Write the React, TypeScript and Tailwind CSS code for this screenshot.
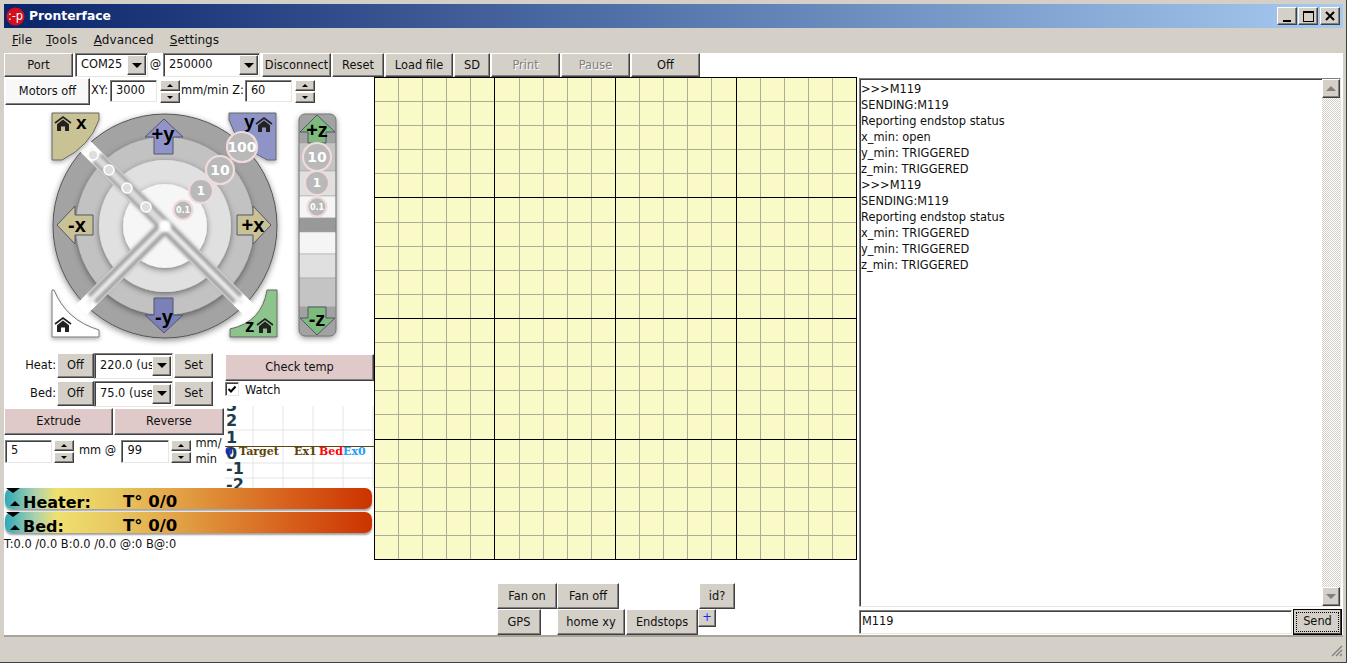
import type { ReactNode } from "react";

const raised =
  "border border-t-white border-l-white border-r-[#404040] border-b-[#404040] shadow-[inset_-1px_-1px_0_#808080]";
const sunken =
  "border border-t-[#808080] border-l-[#808080] border-r-[#e8e6e0] border-b-[#e8e6e0] shadow-[inset_1px_1px_0_#404040]";

const logLines = [
  ">>>M119",
  "SENDING:M119",
  "Reporting endstop status",
  "x_min: open",
  "y_min: TRIGGERED",
  "z_min: TRIGGERED",
  ">>>M119",
  "SENDING:M119",
  "Reporting endstop status",
  "x_min: TRIGGERED",
  "y_min: TRIGGERED",
  "z_min: TRIGGERED",
];

function Btn({ children, className = "" }: { children?: ReactNode; className?: string }) {
  return (
    <div className={`flex shrink-0 items-center justify-center bg-[#d4d0c8] ${raised} ${className}`}>
      {children}
    </div>
  );
}

function TextBtn({ children, className = "" }: { children?: ReactNode; className?: string }) {
  return <Btn className={`pt-px ${className}`}>{children}</Btn>;
}

function PinkBtn({ children, className = "" }: { children?: ReactNode; className?: string }) {
  return (
    <div className={`flex shrink-0 items-center justify-center bg-[#dfc9c9] pt-px ${raised} ${className}`}>
      {children}
    </div>
  );
}

function Tri({ up = false, color = "border-black", size = "small" }: { up?: boolean; color?: string; size?: string }) {
  const w = size === "small" ? "border-x-[3px]" : "border-x-[5px]";
  const h = size === "small" ? (up ? "border-b-[3px]" : "border-t-[3px]") : up ? "border-b-[5px]" : "border-t-[5px]";
  return <div className={`h-0 w-0 border-x-transparent ${w} ${h} ${color}`} />;
}

function Spinner({ className = "" }: { className?: string }) {
  return (
    <div className={`flex w-[20px] shrink-0 flex-col gap-px ${className}`}>
      <Btn className="h-[11px]">
        <Tri up />
      </Btn>
      <Btn className="h-[11px]">
        <Tri />
      </Btn>
    </div>
  );
}

function Field({ value, className = "" }: { value: string; className?: string }) {
  return <div className={`flex shrink-0 items-center bg-white pl-[5px] ${sunken} ${className}`}>{value}</div>;
}

function Combo({ value, className = "" }: { value: string; className?: string }) {
  return (
    <div className={`flex shrink-0 items-center bg-white pl-[5px] pr-px ${sunken} ${className}`}>
      <div className="flex-1 overflow-hidden whitespace-nowrap">{value}</div>
      <Btn className="h-[20px] w-[19px]">
        <Tri size="big" />
      </Btn>
    </div>
  );
}

function Home({ x, y, fill = "#222222" }: { x: number; y: number; fill?: string }) {
  return (
    <g transform={`translate(${x} ${y})`}>
      <path d="M0 7 L8 1 L16 7" fill="none" stroke={fill} strokeWidth="1.6" />
      <path d="M8 3.6 L14 8.2 V15 H10 V10.5 H6 V15 H2 V8.2 Z" fill={fill} />
    </g>
  );
}

function JogArrow({ points, fill, label, x, y }: { points: string; fill: string; label: string; x: number; y: number }) {
  return (
    <g>
      <polygon points={points} fill={fill} stroke="#55556a" strokeWidth="1" />
      <text x={x} y={y} textAnchor="middle" className="fill-black font-['Liberation_Sans'] text-[20px] font-bold">
        {label}
      </text>
    </g>
  );
}

function Step({ x, y, r, label, size }: { x: number; y: number; r: number; label: string; size: number }) {
  return (
    <g>
      <circle cx={x} cy={y} r={r} fill="#b9b9b9" stroke="#f0dada" strokeWidth="2.2" />
      <text
        x={x}
        y={y + size * 0.36}
        textAnchor="middle"
        fontSize={size}
        className="fill-white font-['DejaVu_Sans'] font-bold"
      >
        {label}
      </text>
    </g>
  );
}

function JogPanel() {
  const zBands = [
    { y: 114, h: 29, c: "#a2a2a2" },
    { y: 143, h: 28, c: "#c4c4c4" },
    { y: 171, h: 25, c: "#e0e0e0" },
    { y: 196, h: 22, c: "#f5f5f5" },
    { y: 218, h: 14, c: "#999999" },
    { y: 232, h: 22, c: "#f5f5f5" },
    { y: 254, h: 24, c: "#e0e0e0" },
    { y: 278, h: 29, c: "#c4c4c4" },
    { y: 307, h: 29, c: "#a2a2a2" },
  ];
  return (
    <svg viewBox="4 105 370 247" className="block h-[247px] w-[370px] shrink-0">
      <defs>
        <filter id="ring" x="-20%" y="-20%" width="140%" height="140%">
          <feDropShadow dx="0" dy="2" stdDeviation="3" floodColor="#000000" floodOpacity="0.45" />
        </filter>
        <filter id="corner" x="-20%" y="-20%" width="140%" height="140%">
          <feDropShadow dx="0" dy="2" stdDeviation="2" floodColor="#000000" floodOpacity="0.3" />
        </filter>
        <filter id="soft" x="-30%" y="-30%" width="160%" height="160%">
          <feGaussianBlur stdDeviation="1.5" />
        </filter>
        <clipPath id="zclip">
          <rect x="299" y="114" width="37" height="222" rx="6" />
        </clipPath>
      </defs>

      <circle cx="165" cy="226" r="112" fill="#a3a3a3" stroke="#555555" strokeWidth="1" filter="url(#ring)" />
      <circle cx="165" cy="226" r="89" fill="#c2c2c2" filter="url(#ring)" />
      <circle cx="165" cy="226" r="66" fill="#e0e0e0" filter="url(#ring)" />
      <circle cx="165" cy="226" r="42" fill="#f6f6f6" filter="url(#ring)" />

      {/* three gaps in the wheel, the upper right one stays closed */}
      <g>
        <line x1="82" y1="143" x2="165" y2="226" stroke="#ffffff" strokeWidth="15" />
        <line x1="165" y1="226" x2="249" y2="310" stroke="#ffffff" strokeWidth="15" />
        <line x1="81" y1="310" x2="165" y2="226" stroke="#ffffff" strokeWidth="15" />
        <line x1="97" y1="158" x2="165" y2="226" stroke="#a0a0a0" strokeWidth="14" filter="url(#soft)" />
        <line x1="165" y1="226" x2="238" y2="299" stroke="#a0a0a0" strokeWidth="14" filter="url(#soft)" />
        <line x1="92" y1="299" x2="165" y2="226" stroke="#a0a0a0" strokeWidth="14" filter="url(#soft)" />
        <line x1="90" y1="151" x2="165" y2="226" stroke="#dcdcdc" strokeWidth="7" filter="url(#soft)" />
        <line x1="165" y1="226" x2="242" y2="303" stroke="#eeeeee" strokeWidth="5" filter="url(#soft)" />
        <line x1="88" y1="303" x2="165" y2="226" stroke="#eeeeee" strokeWidth="5" filter="url(#soft)" />
        <circle cx="165" cy="226" r="6" fill="#ffffff" filter="url(#soft)" />
        <line x1="176" y1="215" x2="244" y2="147" stroke="#dddddd" strokeWidth="1" strokeDasharray="2 1" />
      </g>

      {[
        [93, 155],
        [109, 170],
        [127, 188],
        [146, 207],
      ].map(([x, y]) => (
        <circle key={x} cx={x} cy={y} r="5" fill="#dedede" stroke="#ffffff" strokeWidth="1.6" />
      ))}

      <path d="M52 113 H99 V120 Q90 146 62 160 H52 Z" fill="#c9c295" stroke="#666666" strokeWidth="1" filter="url(#corner)" />
      <Home x={55} y={116} />
      <text x="76" y="129" className="fill-black font-['Liberation_Sans'] text-[19px] font-bold">x</text>

      <path d="M229 113 H276 V160 H267 Q237 146 229 120 Z" fill="#8f94c6" stroke="#666666" strokeWidth="1" filter="url(#corner)" />
      <text x="244" y="128" className="fill-black font-['Liberation_Sans'] text-[19px] font-bold">y</text>
      <Home x={256} y={117} />

      <path d="M52 290 V337 H99 V330 Q66 320 54 290 Z" fill="#ffffff" stroke="#777777" strokeWidth="1" filter="url(#corner)" />
      <Home x={55} y={317} />

      <path d="M277 290 V337 H230 V329 Q262 322 267 290 Z" fill="#8cc48c" stroke="#666666" strokeWidth="1" filter="url(#corner)" />
      <text x="245" y="332" className="fill-black font-['Liberation_Sans'] text-[19px] font-bold">z</text>
      <Home x={257} y={318} />

      <JogArrow points="164,119 183,137 173,137 173,154 154,154 154,137 145,137" fill="#9094c8" label="+y" x={163} y={141} />
      <JogArrow points="164,333 183,315 173,315 173,298 154,298 154,315 145,315" fill="#7c80b8" label="-y" x={164} y={324} />
      <JogArrow points="57,225 75,206 75,215 93,215 93,235 75,235 75,244" fill="#c9c295" label="-x" x={77} y={232} />
      <JogArrow points="271,225 253,206 253,215 237,215 237,235 253,235 253,244" fill="#c9c295" label="+x" x={253} y={232} />

      <Step x={242} y={147} r={15} label="100" size={14} />
      <Step x={220} y={170} r={14} label="10" size={14} />
      <Step x={201} y={191} r={12} label="1" size={12} />
      <Step x={183} y={210} r={9.5} label="0.1" size={8} />

      <rect x="299" y="114" width="37" height="222" rx="6" fill="#a2a2a2" filter="url(#ring)" />
      <g clipPath="url(#zclip)">
        {zBands.map((b) => (
          <rect key={b.y} x="299" y={b.y} width="37" height={b.h} fill={b.c} stroke="#a0a0a0" strokeWidth="0.5" />
        ))}
      </g>
      <rect x="299" y="114" width="37" height="222" rx="6" fill="none" stroke="#777777" strokeWidth="1" />
      <JogArrow points="317,115 335,132 326,132 326,143 308,143 308,132 300,132" fill="#7dbb7d" label="+z" x={317} y={137} />
      <JogArrow points="317,335 335,318 326,318 326,307 308,307 308,318 300,318" fill="#7dbb7d" label="-z" x={317} y={326} />
      <Step x={317} y={157} r={14} label="10" size={14} />
      <Step x={317} y={183} r={12} label="1" size={12} />
      <Step x={317} y={207} r={9.5} label="0.1" size={8} />
    </svg>
  );
}

function TempChart() {
  const labels = [
    { t: "3", y: 411 },
    { t: "2", y: 426 },
    { t: "1", y: 443 },
    { t: "0", y: 459 },
    { t: "-1", y: 474 },
    { t: "-2", y: 490 },
  ];
  return (
    <svg viewBox="225 406 149 82" className="block h-[82px] w-[149px]">
      {[253, 283, 313, 343, 373].map((x) => (
        <line key={x} x1={x} y1="406" x2={x} y2="488" stroke="#e4e4e4" />
      ))}
      {[430, 463, 478].map((y) => (
        <line key={y} x1="225" y1={y} x2="374" y2={y} stroke="#e4e4e4" />
      ))}
      <line x1="225" y1="446.5" x2="374" y2="446.5" stroke="#5a4a10" />
      {labels.map((l) => (
        <text key={l.t} x="226" y={l.y} className="fill-[#1c3c4c] font-['DejaVu_Sans'] text-[16px] font-bold">
          {l.t}
        </text>
      ))}
      <text x="225" y="455" className="fill-[#1030d0] font-['DejaVu_Serif'] text-[11px] font-bold">0</text>
      <text x="239" y="455" className="fill-[#5a4408] font-['DejaVu_Serif'] text-[11px] font-bold">Target</text>
      <text x="294" y="455" className="fill-[#5a4408] font-['DejaVu_Serif'] text-[11px] font-bold">Ex1</text>
      <text x="319" y="455" className="fill-[#ff0000] font-['DejaVu_Serif'] text-[11px] font-bold">Bed</text>
      <text x="343" y="455" className="fill-[#1ea0ff] font-['DejaVu_Serif'] text-[11px] font-bold">Ex0</text>
    </svg>
  );
}

function TempBar({ label }: { label: string }) {
  return (
    <div className="relative flex h-[21px] w-[367px] items-center rounded-[7px] bg-[linear-gradient(90deg,#30a8b8_0%,#a8d0b0_8%,#efe070_14%,#e8c860_30%,#df9038_55%,#d65a18_80%,#cc3300_100%)] pt-[8px] shadow-[0_2px_2px_#a0a0a0]">
      <div className="absolute left-[1px] top-0 h-0 w-0 border-x-[7px] border-t-[5px] border-x-transparent border-t-black" />
      <div className="absolute bottom-[3px] left-[5px] h-0 w-0 border-x-[5px] border-b-[5px] border-x-transparent border-b-black" />
      <div className="ml-[18px] w-[100px] font-['DejaVu_Sans'] text-[16px] font-bold leading-none text-black">{label}</div>
      <div className="font-['DejaVu_Sans'] text-[16.5px] font-bold leading-none text-black">T° 0/0</div>
    </div>
  );
}

function LeftPanel() {
  return (
    <div className="flex h-full w-[370px] shrink-0 flex-col bg-white">
      <div className="flex h-[28px] shrink-0 items-center">
        <TextBtn className="ml-px mt-px h-[27px] w-[85px] !bg-[#f8f8f8]">Motors off</TextBtn>
        <span className="ml-px">XY:</span>
        <Field value="3000" className="ml-[2px] h-[22px] w-[47px]" />
        <Spinner className="ml-[3px]" />
        <span className="ml-[1px]">mm/min Z:</span>
        <Field value="60" className="ml-[1px] h-[22px] w-[47px]" />
        <Spinner className="ml-[3px]" />
      </div>
      <JogPanel />
      <div className="flex shrink-0">
        <div className="flex w-[221px] flex-col">
          <div className="mt-px flex h-[25px] items-center justify-end pr-[12px]">
            <span className="mr-px">Heat:</span>
            <TextBtn className="h-[25px] w-[37px]">Off</TextBtn>
            <Combo value="220.0 (user)" className="h-[26px] w-[79px]" />
            <TextBtn className="ml-[1px] h-[25px] w-[39px]">Set</TextBtn>
          </div>
          <div className="mt-[3px] flex h-[25px] items-center justify-end pr-[12px]">
            <span className="mr-px">Bed:</span>
            <TextBtn className="h-[25px] w-[37px]">Off</TextBtn>
            <Combo value="75.0 (user)" className="h-[26px] w-[79px]" />
            <TextBtn className="ml-[1px] h-[25px] w-[39px]">Set</TextBtn>
          </div>
          <div className="mt-[2px] flex">
            <PinkBtn className="h-[27px] w-[109px]">Extrude</PinkBtn>
            <PinkBtn className="ml-px h-[27px] w-[110px]">Reverse</PinkBtn>
          </div>
          <div className="flex items-center">
            <Field value="5" className="ml-px h-[23px] w-[47px]" />
            <Spinner className="ml-[2px]" />
            <span className="ml-[5px] w-[38px] whitespace-nowrap">mm @</span>
            <Field value="99" className="ml-[5px] h-[23px] w-[48px]" />
            <Spinner className="ml-[2px]" />
            <span className="ml-[4px] w-[30px] leading-[16px]">mm/ min</span>
          </div>
        </div>
        <div className="flex w-[149px] flex-col">
          <PinkBtn className="mt-[2px] h-[27px] w-[149px]">Check temp</PinkBtn>
          <div className="flex h-[25px] items-start pt-px">
            <div className={`flex h-[14px] w-[14px] items-center justify-center bg-white ${sunken}`}>
              <svg viewBox="0 0 10 10" className="h-[10px] w-[10px]">
                <path d="M1.5 5 L4 7.5 L8.5 2.5" fill="none" stroke="#000000" strokeWidth="2" />
              </svg>
            </div>
            <span className="ml-[6px]">Watch</span>
          </div>
          <TempChart />
        </div>
      </div>
      <div className="flex shrink-0 flex-col gap-[3px] pl-px">
        <TempBar label="Heater:" />
        <TempBar label="Bed:" />
      </div>
      <div className="mt-[3px] leading-[16px]">T:0.0 /0.0 B:0.0 /0.0 @:0 B@:0</div>
    </div>
  );
}

function PlateGrid() {
  const majors = [0.5, 120.5, 241.5, 362.5, 482.5];
  const minors: number[] = [];
  for (let i = 0; i <= 20; i++) {
    if (i % 5 !== 0) minors.push(Math.round(i * 24.1) + 0.5);
  }
  return (
    <svg viewBox="0 0 483 483" className="block h-[483px] w-[483px] shrink-0 bg-[#fafac8]">
      {minors.map((p) => (
        <g key={p} stroke="#adae90" strokeWidth="1">
          <line x1={p} y1="0" x2={p} y2="483" />
          <line x1="0" y1={p} x2="483" y2={p} />
        </g>
      ))}
      {majors.map((p) => (
        <g key={p} stroke="#000000" strokeWidth="1">
          <line x1={p} y1="0" x2={p} y2="483" />
          <line x1="0" y1={p} x2="483" y2={p} />
        </g>
      ))}
    </svg>
  );
}

function CenterPanel() {
  return (
    <div className="flex h-full w-[485px] shrink-0 flex-col bg-white">
      <PlateGrid />
      <div className="mt-[23px] flex h-[26px] pl-[123px]">
        <TextBtn className="h-[26px] w-[60px]">Fan on</TextBtn>
        <TextBtn className="h-[26px] w-[62px]">Fan off</TextBtn>
        <TextBtn className="ml-[80px] h-[26px] w-[36px]">id?</TextBtn>
      </div>
      <div className="flex h-[26px] items-start pl-[123px]">
        <TextBtn className="h-[26px] w-[44px]">GPS</TextBtn>
        <TextBtn className="ml-[16px] h-[26px] w-[68px]">home xy</TextBtn>
        <TextBtn className="ml-px h-[26px] w-[72px]">Endstops</TextBtn>
        <Btn className="h-[18px] w-[18px] text-[#2020ff]">+</Btn>
      </div>
    </div>
  );
}

function LogPanel() {
  return (
    <div className="flex h-full w-[484px] shrink-0 flex-col bg-white">
      <div className={`mt-px flex h-[530px] w-[482px] ${sunken}`}>
        <div className="flex-1 pl-px pt-[2px] leading-[16px]">
          {logLines.map((line, i) => (
            <div key={i}>{line}</div>
          ))}
        </div>
        <div className="flex w-[18px] flex-col bg-[repeating-conic-gradient(#d4d0c8_0_25%,#ffffff_0_50%)] bg-size-[2px_2px]">
          <Btn className="h-[19px] w-[18px]">
            <Tri up color="border-[#808080]" size="big" />
          </Btn>
          <div className="flex-1" />
          <Btn className="h-[19px] w-[18px]">
            <Tri color="border-[#808080]" size="big" />
          </Btn>
        </div>
      </div>
      <div className="mt-[2px] flex items-center">
        <Field value="M119" className="h-[24px] w-[433px] !pl-[2px]" />
        <div className="ml-px flex h-[26px] w-[49px] items-center justify-center border border-black bg-[#d4d0c8] p-[2px] shadow-[inset_-1px_-1px_0_#404040]">
          <div className="flex h-full w-full items-center justify-center border border-dotted border-black">Send</div>
        </div>
      </div>
    </div>
  );
}

export default function App() {
  const disabledText = "text-[#808080] [text-shadow:1px_1px_0_#ffffff]";
  return (
    <div className="h-[663px] w-[1347px] overflow-hidden border-b border-r border-b-[#404040] border-r-[#404040] bg-[#d4d0c8] font-['DejaVu_Sans'] text-[11.4px] text-[#101010]">
      <div className="flex h-[662px] w-[1346px] flex-col pb-[3px] pl-[4px] pr-[3px] pt-[4px]">
        <div className="flex h-[24px] shrink-0 items-center bg-[linear-gradient(90deg,#0a246a,#a6caf0)] pr-[3px]">
          <svg viewBox="0 0 20 20" className="ml-[2px] h-[19px] w-[19px] shrink-0">
            <circle cx="10" cy="10" r="9.5" fill="#d01020" />
            <text x="10" y="14" textAnchor="middle" className="fill-white font-['DejaVu_Sans'] text-[12px]">
              :-p
            </text>
          </svg>
          <div className="ml-[4px] flex-1 font-['DejaVu_Sans'] text-[12.3px] font-bold text-white">Pronterface</div>
          <Btn className="h-[18px] w-[20px]">
            <div className="mt-[9px] h-[2px] w-[8px] bg-black" />
          </Btn>
          <Btn className="ml-px h-[18px] w-[20px]">
            <div className="h-[11px] w-[11px] border border-t-2 border-black" />
          </Btn>
          <Btn className="ml-[2px] h-[18px] w-[20px]">
            <svg viewBox="0 0 10 10" className="h-[10px] w-[10px]">
              <path d="M1 1 L9 9 M9 1 L1 9" stroke="#000000" strokeWidth="2" />
            </svg>
          </Btn>
        </div>
        <div className="flex h-[25px] shrink-0 items-center pb-[2px] text-[12px]">
          <span className="ml-[8px]"><u>F</u>ile</span>
          <span className="ml-[14px] tracking-[0.4px]"><u>T</u>ools</span>
          <span className="ml-[16px] tracking-[0.1px]"><u>A</u>dvanced</span>
          <span className="ml-[16px]"><u>S</u>ettings</span>
        </div>
        <div className="flex h-[24px] shrink-0 items-center bg-white">
          <TextBtn className="h-[24px] w-[69px]">Port</TextBtn>
          <Combo value="COM25" className="ml-[2px] h-[24px] w-[73px]" />
          <span className="mx-[1px] w-[13px] text-center">@</span>
          <Combo value="250000" className="h-[24px] w-[97px]" />
          <TextBtn className="ml-[2px] h-[24px] w-[69px]">Disconnect</TextBtn>
          <TextBtn className="ml-px h-[24px] w-[52px]">Reset</TextBtn>
          <TextBtn className="ml-px h-[24px] w-[68px]">Load file</TextBtn>
          <TextBtn className="ml-px h-[24px] w-[36px]">SD</TextBtn>
          <TextBtn className={`ml-px h-[24px] w-[69px] ${disabledText}`}>Print</TextBtn>
          <TextBtn className={`ml-px h-[24px] w-[69px] ${disabledText}`}>Pause</TextBtn>
          <TextBtn className="ml-px h-[24px] w-[69px]">Off</TextBtn>
        </div>
        <div className="flex min-h-0 flex-1 bg-white">
          <LeftPanel />
          <CenterPanel />
          <LogPanel />
        </div>
        <div className="relative h-[24px] shrink-0 border-t-2 border-t-[#a8a49c]">
          <svg viewBox="0 0 14 14" className="absolute bottom-[2px] right-0 h-[14px] w-[14px]">
            <path d="M13 3 L3 13 M13 7 L7 13 M13 11 L11 13" stroke="#808080" strokeWidth="1.4" />
          </svg>
        </div>
      </div>
    </div>
  );
}
